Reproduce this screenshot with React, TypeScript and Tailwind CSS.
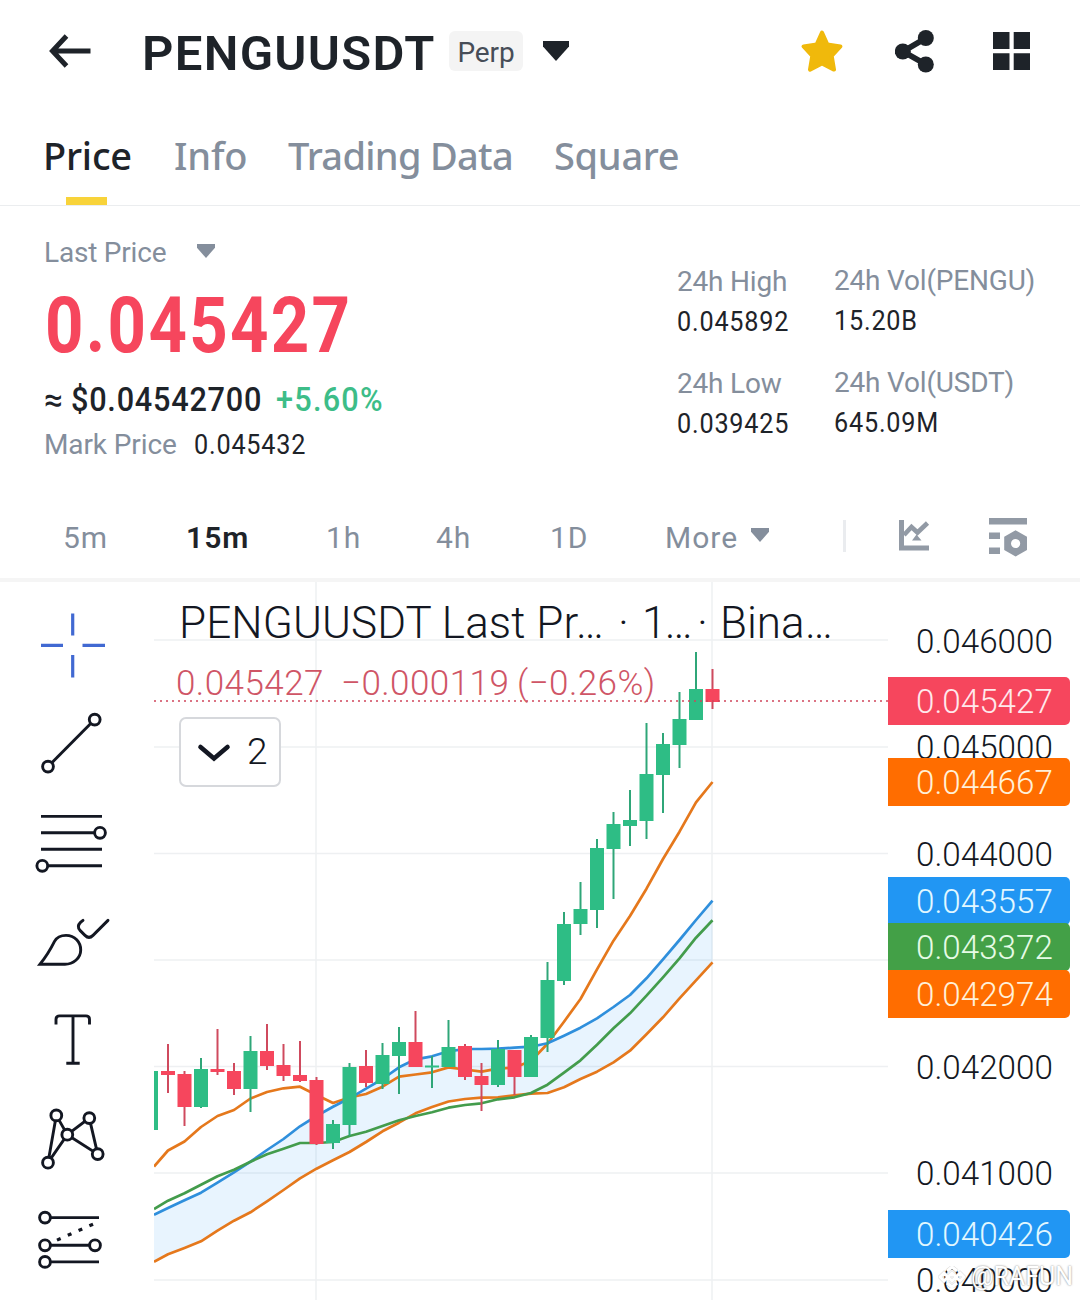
import React from 'react';
import clsx from 'clsx';

type Candle = [top: number, bottom: number, high: number, low: number, up: boolean];

const TABS = [
  { label: 'Price', cell: 'w-[131px] tracking-[-0.2px]', active: true },
  { label: 'Info', cell: 'w-[114px] tracking-[-0.2px]' },
  { label: 'Trading Data', cell: 'w-[266px] tracking-[-0.7px]' },
  { label: 'Square', cell: 'w-[140px] tracking-[-0.3px]' },
];

const INTERVALS = [
  { label: '5m', cell: 'w-[123px]' },
  { label: '15m', cell: 'w-[140px]', active: true },
  { label: '1h', cell: 'w-[110px]' },
  { label: '4h', cell: 'w-[114px]' },
  { label: '1D', cell: 'w-[115px]' },
];

// Chart geometry, in page pixels
const FIRST_X = 168;
const STEP = 16.5;
const GRID_Y = [640, 747, 853.5, 960, 1066.5, 1173, 1280];
const GRID_X = [316, 712];

const CANDLES: Candle[] = [
  [1071, 1075, 1044, 1093, false],
  [1074, 1107, 1071, 1126, false],
  [1069, 1107, 1058, 1108, true],
  [1069, 1072, 1029, 1075, false],
  [1071, 1089, 1063, 1095, false],
  [1051, 1089, 1036, 1112, true],
  [1051, 1066, 1024, 1070, false],
  [1065, 1076, 1044, 1081, false],
  [1075, 1081, 1041, 1082, false],
  [1080, 1144, 1077, 1145, false],
  [1124, 1143, 1120, 1149, true],
  [1067, 1125, 1063, 1136, true],
  [1066, 1083, 1050, 1087, false],
  [1055, 1084, 1043, 1089, true],
  [1042, 1056, 1027, 1094, true],
  [1042, 1067, 1011, 1067, false],
  [1065.5, 1067.5, 1056, 1088, true],
  [1047, 1067, 1020, 1067, true],
  [1046, 1077, 1044, 1080, false],
  [1076, 1085, 1063, 1111, false],
  [1049, 1085, 1040, 1087, true],
  [1050, 1077, 1050, 1095, false],
  [1037, 1077, 1035, 1077, true],
  [980, 1038, 962, 1052, true],
  [924, 981, 912, 985, true],
  [909, 924, 882, 935, true],
  [848, 910, 839, 928, true],
  [824, 849, 812, 899, true],
  [820, 826, 790, 846, true],
  [774, 821, 723, 839, true],
  [744, 775, 733, 813, true],
  [719, 745, 692, 768, true],
  [689, 720, 652, 720, true],
  [689, 702, 669, 709, false],
];

// The first point of every series sits on the left edge of the pane
const UPPER = [
  1166.5, 1150.5, 1141.5, 1127, 1116, 1110, 1098.5, 1092, 1088.3, 1086.7, 1095, 1103, 1097.5, 1094, 1086.7, 1076.7,
  1074.5, 1072.3, 1067.4, 1069.5, 1071.7, 1068.7, 1067.5, 1061, 1043.7, 1021.7, 999, 969.3, 940.7, 916, 888.7, 859,
  831.7, 802.3, 782,
];
const LOWER = [
  1261.7, 1254.3, 1248, 1241.3, 1230.7, 1220.7, 1212.3, 1201.3, 1190, 1178.3, 1168.7, 1160.3, 1152, 1142, 1131.3,
  1122.7, 1113.3, 1107, 1101.5, 1099, 1097.7, 1097.3, 1095.3, 1093.7, 1093, 1087.3, 1079, 1071.7, 1062.3, 1050.7,
  1034.3, 1017.3, 998.3, 980.3, 962.3,
];
const BASIS = [
  1214.7, 1208, 1200.3, 1192.7, 1182.7, 1172.3, 1161.7, 1150, 1139, 1126.3, 1116, 1106.7, 1098.3, 1088.7, 1079, 1067.3,
  1059.3, 1056.3, 1051.3, 1049, 1049, 1048.7, 1047.7, 1046.7, 1043.3, 1035.7, 1027.7, 1018.3, 1007, 995, 978.3, 959.3,
  940, 920, 900.7,
];
const AVERAGE = [
  1209, 1200.7, 1193.3, 1184.7, 1176.3, 1169.7, 1161.7, 1154.3, 1148.7, 1143, 1143, 1142, 1136, 1131.7, 1126, 1120.3,
  1116, 1112.3, 1107.7, 1105, 1103.3, 1099.3, 1097.3, 1093, 1084.7, 1072.7, 1060.3, 1044.7, 1028.3, 1013.3, 995.7,
  977.3, 958.3, 937.7, 920.3,
];

const AXIS_LABELS = [
  { y: 641, text: '0.046000' },
  { y: 747, text: '0.045000' },
  { y: 854, text: '0.044000' },
  { y: 1067, text: '0.042000' },
  { y: 1173, text: '0.041000' },
  { y: 1280, text: '0.040000' },
];

const AXIS_TAGS = [
  { y: 701, text: '0.045427', color: 'bg-[#f6465d] text-[#ffe9ec]' },
  { y: 782, text: '0.044667', color: 'bg-[#ff6d00] text-[#fff0d8]' },
  { y: 901, text: '0.043557', color: 'bg-[#2196f3] text-[#e2f8ff]' },
  { y: 947, text: '0.043372', color: 'bg-[#43a047] text-[#e6fbe6]' },
  { y: 994, text: '0.042974', color: 'bg-[#ff6d00] text-[#fff0d8]' },
  { y: 1234, text: '0.040426', color: 'bg-[#2196f3] text-[#e2f8ff]' },
];

const toPoints = (ys: number[]) => ys.map((y, i) => `${i === 0 ? 154 : FIRST_X + (i - 1) * STEP},${y}`);

const Caret = ({ className }: { className?: string }) => (
  <svg viewBox="0 0 25 20" preserveAspectRatio="none" className={clsx('shrink-0', className)} fill="currentColor">
    <path d="M0 0H25V5.5L12.5 20L0 5.5Z" />
  </svg>
);

const Header = () => (
  <header className="flex h-[102px] items-center text-[#1e2329]">
    <svg viewBox="0 0 42 34" className="ml-[49px] h-[34px] w-[42px] shrink-0" fill="none" stroke="currentColor" strokeWidth="5">
      <path d="M17.5 2L3.5 17L17.5 32M3.5 17H41.5" />
    </svg>
    <h1 className="ml-[51px] w-[307px] shrink-0 pt-1 text-[49px] leading-none font-semibold tracking-[1.3px]">PENGUUSDT</h1>
    <span className="flex h-10 w-[74px] shrink-0 items-center justify-center rounded-md bg-[#f4f4f4] pt-1 text-[28px] leading-none tracking-[-0.1px] text-[#474d57]">
      Perp
    </span>
    <Caret className="ml-5 h-5 w-[26px]" />
    <svg viewBox="0 0 42 44" className="ml-[232px] h-11 w-[42px] shrink-0" fill="#f0b90b" stroke="#f0b90b" strokeWidth="4" strokeLinejoin="round">
      <path d="M21 3.5L26.4 15.6L39.4 17.4L30.7 26.8L33 40.6L21 34.4L9 40.6L11.3 26.8L2.6 17.4L15.6 15.6Z" />
    </svg>
    <svg viewBox="0 0 40 43" className="ml-[52px] h-[43px] w-10 shrink-0" fill="currentColor">
      <path d="M8 21.500L31 8M8 21.500L31 34.500" stroke="currentColor" strokeWidth="5.8" />
      <circle cx="7.8" cy="21.5" r="8" />
      <circle cx="30.8" cy="8" r="8" />
      <circle cx="30.8" cy="34.5" r="8" />
    </svg>
    <svg viewBox="0 0 37 38" className="ml-[58px] h-[38px] w-[37px] shrink-0" fill="currentColor">
      <path d="M0 0H16.5V17H0ZM20.7 0H37V17H20.7ZM0 21.2H16.5V38H0ZM20.7 21.2H37V38H20.7Z" />
    </svg>
  </header>
);

const Tabs = () => (
  <nav className="flex h-[104px] border-b border-[#ebedef] pl-[43px] font-['Noto_Sans','Roboto',sans-serif] text-[38px] font-medium text-[#848e9c]">
    {TABS.map((tab) => (
      <div key={tab.label} className={clsx('relative shrink-0 whitespace-nowrap pt-[26px] leading-[54px]', tab.cell, tab.active && 'text-[#1e2329]')}>
        {tab.label}
        {tab.active && <span className="absolute bottom-0 left-[23px] h-2 w-[41px] bg-[#f8d33a]" />}
      </div>
    ))}
  </nav>
);

const Stat = ({ label, value }: { label: string; value: string }) => (
  <div className="h-[102px] whitespace-nowrap text-[28px] leading-10">
    <div className="tracking-[-0.2px] text-[#848e9c]">{label}</div>
    <div className="origin-left scale-x-90 tracking-[0.9px] text-[#1e2329]">{value}</div>
  </div>
);

const Summary = () => (
  <section className="flex h-[294px] whitespace-nowrap">
    <div className="w-[633px] shrink-0 pt-[27px] pl-[44px] text-[#1e2329]">
      <div className="flex h-10 items-center text-[28px] text-[#848e9c]">
        <span className="w-[153px] tracking-[-0.2px]">Last Price</span>
        <Caret className="-mt-1 h-[14px] w-[18px]" />
      </div>
      <div className="ml-px h-[104px] origin-left scale-x-[0.86] text-[78px] leading-[106px] font-bold tracking-[2.7px] text-[#f6465d]">
        0.045427
      </div>
      <div className="flex h-[46px] items-center text-[33px] font-medium">
        <span className="w-[27px]">≈</span>
        <span className="w-[205px] origin-left scale-x-[0.93] tracking-[0.8px]">$0.04542700</span>
        <span className="origin-left scale-x-[0.93] tracking-[1.3px] text-[#3dbd88]">+5.60%</span>
      </div>
      <div className="flex h-[44px] items-center text-[28px]">
        <span className="w-[150px] tracking-[-0.1px] text-[#848e9c]">Mark Price</span>
        <span className="origin-left scale-x-90 tracking-[0.9px]">0.045432</span>
      </div>
    </div>
    <div className="w-[201px] shrink-0 pt-[56px] pl-[44px]">
      <Stat label="24h High" value="0.045892" />
      <Stat label="24h Low" value="0.039425" />
    </div>
    <div className="pt-[55px]">
      <Stat label="24h Vol(PENGU)" value="15.20B" />
      <Stat label="24h Vol(USDT)" value="645.09M" />
    </div>
  </section>
);

const IntervalBar = () => (
  <div className="flex h-[82px] items-center border-b-4 border-[#f5f5f5] pl-[63px] text-[30px] tracking-[1px] text-[#848e9c]">
    {INTERVALS.map(({ label, cell, active }) => (
      <span key={label} className={clsx('-mt-[3px] shrink-0', cell, active && 'font-semibold text-[#1e2329]')}>
        {label}
      </span>
    ))}
    <span className="-mt-[3px] w-[86px]">More</span>
    <Caret className="-mt-2 h-[14px] w-[18px]" />
    <span className="-mt-[6px] ml-[74px] h-8 w-[3px] bg-[#eaecef]" />
    <svg viewBox="0 0 31 31" className="-mt-2 ml-[53px] size-[31px] shrink-0" fill="none" stroke="#929aa5" strokeWidth="5">
      <path d="M2.5 0V28H30" />
      <path d="M5 15L12.500 7L18.500 12.500L28.500 3" strokeWidth="4.6" />
      <path d="M17.500 14.500L22.500 20.500H13Z" fill="#929aa5" stroke="none" />
    </svg>
    <svg viewBox="0 0 39 40" className="-mt-[5px] ml-[59px] h-10 w-[39px] shrink-0" fill="#929aa5">
      <path d="M0 1H38V7.5H0ZM0 15.5H11V22H0ZM0 30.5H11V37H0Z" />
      <path fillRule="evenodd" d="M26.6 13.3L38 19.8V33L26.6 39.6L15.2 33V19.8ZM26.6 21.9A4.6 4.6 0 1 0 26.6 31.1A4.6 4.6 0 1 0 26.6 21.9Z" />
    </svg>
  </div>
);

const Knob = ({ x, y }: { x: number; y: number }) => <circle cx={x} cy={y} r="5.4" fill="#fff" />;

const TOOLS: { name: string; art: React.ReactNode }[] = [
  {
    name: 'crosshair',
    art: <path stroke="#4169d2" strokeWidth="3.2" d="M.7-32V-10M.7 9.5V32M-31 0H-9M10.5 0H33" />,
  },
  {
    name: 'trend-line',
    art: (
      <>
        <path d="M-24 22.2L22.7-24.8" />
        <Knob x={-24} y={22.2} />
        <Knob x={22.7} y={-24.8} />
      </>
    ),
  },
  {
    name: 'fib',
    art: (
      <>
        <path d="M-31-27H30M-31-10.6H28M-31 5.8H30M-30 22.4H30" />
        <Knob x={28} y={-10.6} />
        <Knob x={-29.7} y={22.4} />
      </>
    ),
  },
  {
    name: 'brush',
    art: (
      <>
        <path d="M-32 22.8C-24 13-20 5-17.5 0C-15-4.500-10.500-6-6-6C3-6 8.700 1 8.700 8.500C8.700 17 1 22.800-7 22.800Z" />
        <path strokeLinecap="round" d="M11-21L8.500-19Q4.500-15 8-11L13-6Q17-2 21-6L36-21" />
      </>
    ),
  },
  {
    name: 'text',
    art: <path d="M-16-16V-21Q-16-24.500-12.500-24.500H14Q17.500-24.500 17.500-21V-16M1-24.500V22.800M-5.700 22.800H7.700" />,
  },
  {
    name: 'pattern',
    art: (
      <>
        <path d="M-24 23.300L-15.700-24L-4.700-4.700L17.300-21.300L25.700 14.700L-4.700-4.700Z" />
        <Knob x={-15.7} y={-24} />
        <Knob x={17.3} y={-21.3} />
        <Knob x={-4.7} y={-4.7} />
        <Knob x={-24} y={23.3} />
        <Knob x={25.7} y={14.7} />
      </>
    ),
  },
  {
    name: 'position',
    art: (
      <>
        <path d="M-27-20.800H27M-27 6.900H23M-27 23.500H27" />
        <path strokeWidth="3.2" strokeDasharray="4 7.8" d="M-15 1.700L24-15.500" />
        <Knob x={-27} y={-20.8} />
        <Knob x={-27} y={6.9} />
        <Knob x={23} y={6.9} />
        <Knob x={-27} y={23.5} />
      </>
    ),
  },
];

const Toolbar = () => (
  <aside className="flex w-[154px] shrink-0 flex-col pt-[14px] pl-[22px]">
    {TOOLS.map((tool) => (
      <svg
        key={tool.name}
        viewBox="-50 -49.4 100 98.8"
        className="h-[98.8px] w-[100px] shrink-0"
        fill="none"
        stroke="#131722"
        strokeWidth="2.9"
      >
        {tool.art}
      </svg>
    ))}
  </aside>
);

const PriceChart = () => {
  const basis = toPoints(BASIS);
  const lower = toPoints(LOWER);

  return (
    <svg viewBox="154 582 734 718" className="block h-[718px] w-[734px]" fill="none">
      <g stroke="#eef0f2" strokeWidth="1.5">
        {GRID_Y.map((y) => (
          <path key={y} d={`M154 ${y}H888`} />
        ))}
        {GRID_X.map((x) => (
          <path key={x} d={`M${x} 582V1300`} />
        ))}
      </g>

      <polygon points={[...basis, ...[...lower].reverse()].join(' ')} fill="#2196f3" fillOpacity="0.1" />
      <g strokeWidth="2.7" strokeLinejoin="round">
        <polyline points={toPoints(UPPER).join(' ')} stroke="#e5781c" />
        <polyline points={lower.join(' ')} stroke="#e5781c" />
        <polyline points={basis.join(' ')} stroke="#2f8fdc" />
        <polyline points={toPoints(AVERAGE).join(' ')} stroke="#439c4c" />
      </g>

      <rect x="154" y="1071" width="4" height="59" fill="#2ebd85" />
      {CANDLES.map(([top, bottom, high, low, up], i) => {
        const x = FIRST_X + i * STEP;
        return (
          <g key={i}>
            <path d={`M${x} ${high}V${low}`} stroke={up ? '#2fa678' : '#cf4a5e'} strokeWidth="2" />
            <rect x={x - 7} y={top} width="14" height={bottom - top} fill={up ? '#2ebd85' : '#f6465d'} />
          </g>
        );
      })}
      <path d="M154 701H888" stroke="#d0455b" strokeWidth="1.6" strokeDasharray="2 4" />
    </svg>
  );
};

const Legend = () => (
  <div className="absolute top-[10px] left-[24px] font-light whitespace-nowrap">
    <div className="ml-px flex h-[62px] items-center text-[44px] text-[#131722]">
      <span className="w-[439px] tracking-[0.1px]">PENGUUSDT Last Pr…</span>
      <span className="w-[24px]">·</span>
      <span className="w-[55px] tracking-[-2px]">1…</span>
      <span className="w-[23px]">·</span>
      <span>Bina…</span>
    </div>
    <div className="-ml-[2px] flex h-[60px] items-center text-[35px] tracking-[0.45px] text-[#cf5566]">
      <span className="w-[165px]">0.045427</span>
      <span className="w-[176px]">−0.000119</span>
      <span>(−0.26%)</span>
    </div>
    <button className="mt-[3px] ml-[1px] flex h-[70px] w-[102px] items-center rounded-[7px] border-2 border-[#d6d8dc] bg-white pl-[16px] text-[37px] font-light text-[#131722]">
      <svg viewBox="0 0 34 20" className="mt-[2px] mr-[16px] h-5 w-[34px]" fill="none" stroke="currentColor" strokeWidth="4.6" strokeLinecap="round">
        <path d="M3.500 4L17 15.500L30.500 4" />
      </svg>
      2
    </button>
  </div>
);

const PriceAxis = () => (
  <div className="relative w-[192px] shrink-0 text-[33.2px] leading-[50px] font-light">
    {AXIS_LABELS.map(({ y, text }) => (
      <div key={text} className="absolute left-7 text-[#131722]" style={{ top: y - 582 - 24 }}>
        {text}
      </div>
    ))}
    {AXIS_TAGS.map(({ y, text, color }) => (
      <div key={text} className={clsx('absolute left-0 h-12 w-[182px] rounded-r-[5px] pl-7', color)} style={{ top: y - 582 - 24 }}>
        {text}
      </div>
    ))}
    <div className="absolute bottom-[9px] left-[50px] flex items-center text-[25px] leading-7 font-normal text-white [text-shadow:0_0_2px_#777]">
      <svg viewBox="0 0 28 22" className="mr-[5px] h-[22px] w-7" fill="none" stroke="#fff" strokeWidth="3">
        <path d="M2 11L6 7L10 11L6 15ZM9 5L14 1L19 5M9 17L14 21L19 17M14 7L18 11L14 15L10 11ZM22 7L26 11L22 15L18 11Z" stroke="#b5b5b5" strokeWidth="4" opacity=".5" />
        <path d="M2 11L6 7L10 11L6 15ZM9 5L14 1L19 5M9 17L14 21L19 17M14 7L18 11L14 15L10 11ZM22 7L26 11L22 15L18 11Z" />
      </svg>
      <span>@RAFUN</span>
    </div>
  </div>
);

export default function App() {
  return (
    <main className="h-[1300px] w-[1080px] overflow-hidden bg-white font-['Roboto',sans-serif]">
      <Header />
      <Tabs />
      <Summary />
      <IntervalBar />
      <div className="flex h-[718px]">
        <Toolbar />
        <div className="relative w-[734px] shrink-0">
          <PriceChart />
          <Legend />
        </div>
        <PriceAxis />
      </div>
    </main>
  );
}
